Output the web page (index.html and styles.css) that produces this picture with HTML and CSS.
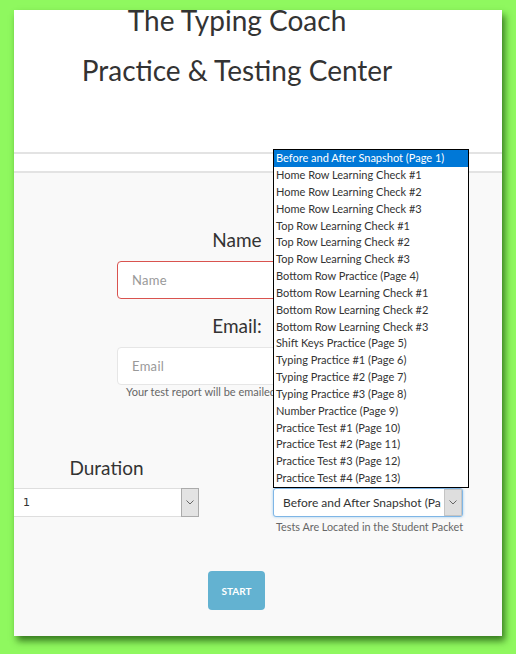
FILE: index.html
```html
<!DOCTYPE html>
<html lang="en">
<head>
<meta charset="utf-8">
<title>The Typing Coach</title>
<link rel="stylesheet" href="styles.css">
</head>
<body>
<div class="card">
  <header class="head">
    <h1 class="title">The Typing Coach</h1>
    <h1 class="title">Practice &amp; Testing Center</h1>
  </header>
  <div class="rule"></div>
  <main class="content">
    <div class="form">
      <label class="lbl">Name</label>
      <div class="input error"><span class="ph">Name</span></div>
      <label class="lbl lbl-email">Email:</label>
      <div class="input"><span class="ph">Email</span></div>
      <p class="help help-email">Your test report will be emailed to you</p>
    </div>
    <div class="row">
      <div class="col col-left">
        <label class="lbl">Duration</label>
        <div class="select select-dur">
          <span class="sel-text">1</span>
          <span class="arrow"><svg width="8" height="5" viewBox="0 0 8 5"><polyline points="0.5,0.5 4,4 7.5,0.5" fill="none" stroke="#666" stroke-width="1"/></svg></span>
        </div>
      </div>
      <div class="col col-right">
        <label class="lbl">Test</label>
        <div class="select-wrap">
          <ul class="listbox">
            <li class="opt sel">Before and After Snapshot (Page 1)</li>
            <li class="opt">Home Row Learning Check #1</li>
            <li class="opt">Home Row Learning Check #2</li>
            <li class="opt">Home Row Learning Check #3</li>
            <li class="opt">Top Row Learning Check #1</li>
            <li class="opt">Top Row Learning Check #2</li>
            <li class="opt">Top Row Learning Check #3</li>
            <li class="opt">Bottom Row Practice (Page 4)</li>
            <li class="opt">Bottom Row Learning Check #1</li>
            <li class="opt">Bottom Row Learning Check #2</li>
            <li class="opt">Bottom Row Learning Check #3</li>
            <li class="opt">Shift Keys Practice (Page 5)</li>
            <li class="opt">Typing Practice #1 (Page 6)</li>
            <li class="opt">Typing Practice #2 (Page 7)</li>
            <li class="opt">Typing Practice #3 (Page 8)</li>
            <li class="opt">Number Practice (Page 9)</li>
            <li class="opt">Practice Test #1 (Page 10)</li>
            <li class="opt">Practice Test #2 (Page 11)</li>
            <li class="opt">Practice Test #3 (Page 12)</li>
            <li class="opt">Practice Test #4 (Page 13)</li>
          </ul>
          <div class="select select-test">
            <span class="sel-text">Before and After Snapshot (Page 1)</span>
            <span class="arrow"><svg width="8" height="5" viewBox="0 0 8 5"><polyline points="0.5,0.5 4,4 7.5,0.5" fill="none" stroke="#666" stroke-width="1"/></svg></span>
          </div>
        </div>
        <p class="help help-test">Tests Are Located in the Student Packet</p>
      </div>
    </div>
    <button class="start" type="button">START</button>
  </main>
</div>
</body>
</html>
```
FILE: styles.css
```css
* { box-sizing: border-box; }
html, body { margin: 0; padding: 0; }
body {
  background: #8ff85f;
  font-family: "Lato", "Open Sans", sans-serif;
  color: #333;
  height: 654px;
  overflow: hidden;
}
.card {
  margin: 10px 14px 0 14px;
  width: 488px;
  height: 626px;
  background: #f9f9f9;
  box-shadow: 3px 5px 7px rgba(40, 100, 20, 0.85);
  overflow: hidden;
}
.head {
  display: flow-root;
  background: #fff;
  height: 142px;
  padding-right: 42px;
  text-align: center;
}
.title {
  margin: 0;
  font-weight: 400;
  font-size: 28px;
  line-height: 50px;
  color: #333;
}
.title:first-child { margin-top: -15px; }
.rule {
  height: 21px;
  background: #fff;
  border-top: 2px solid #e3e3e3;
  border-bottom: 2px solid #e3e3e3;
}
.content {
  padding-top: 57px;
}
.form {
  width: 240px;
  margin-left: 103px;
  text-align: center;
}
.lbl {
  display: block;
  font-size: 19px;
  line-height: 20px;
  color: #333;
  text-align: center;
}
.input {
  height: 38px;
  margin-top: 11px;
  background: #fff;
  border: 1px solid #e6e6e6;
  border-radius: 4px;
  text-align: left;
  padding: 0 14px;
  display: flex;
  align-items: center;
}
.input.error { border-color: #d9534f; }
.ph { color: #999; font-size: 13px; letter-spacing: 0.3px; }
.lbl-email { margin-top: 17px; }
.help {
  margin: 0;
  font-size: 11px;
  line-height: 14px;
  color: #666;
  white-space: nowrap;
}
.help-email { text-align: left; padding-left: 9px; }
.row {
  display: flex;
  margin-top: 59px;
  gap: 74px;
}
.col-left { width: 185px; }
.col-right { width: 190px; }
.col .lbl { margin-bottom: 10px; }
.select {
  height: 29px;
  background: #fff;
  border: 1px solid #dedede;
  display: flex;
  align-items: center;
  font-size: 12px;
  color: #333;
}
.sel-text {
  flex: 1;
  overflow: hidden;
  white-space: nowrap;
  margin-left: 9px;
  margin-right: 9px;
}
.arrow {
  width: 18px;
  align-self: stretch;
  background: #e3e3e3;
  border: 1px solid #ababab;
  margin: -1px -1px -1px 0;
  display: flex;
  align-items: center;
  justify-content: center;
}
.select-dur { border-left: none; font-family: "DejaVu Sans", sans-serif; font-size: 11px; }
.select-wrap { position: relative; }
.select-test {
  border: 1px solid #7fb6e6;
  border-radius: 3px;
  box-shadow: 0 0 3px rgba(102, 175, 233, 0.6);
}
.select-test .sel-text { margin-left: 9px; margin-right: 3px; font-size: 12px; }
.select-test .arrow { margin: 0; border-color: #c4c4c4; background: #dedede; }
.listbox {
  position: absolute;
  left: 0;
  bottom: 100%;
  width: 196px;
  margin: 0;
  padding: 0;
  list-style: none;
  background: #fff;
  border: 1px solid #000;
  z-index: 2;
}
.opt {
  height: 16.85px;
  line-height: 16.85px;
  padding-left: 2px;
  font-size: 11px;
  color: #333;
  white-space: nowrap;
  overflow: hidden;
}
.opt.sel { background: #0078d7; color: #fff; }
.help-test { margin-top: 3px; padding-left: 3px; font-size: 10.8px; }
.start {
  display: block;
  margin: 37px 0 0 194px;
  width: 57px;
  height: 39px;
  border: none;
  border-radius: 4px;
  background: #63b2d1;
  color: #fff;
  font-family: "Lato", sans-serif;
  font-weight: 700;
  font-size: 10px;
  padding: 0;
}
```
